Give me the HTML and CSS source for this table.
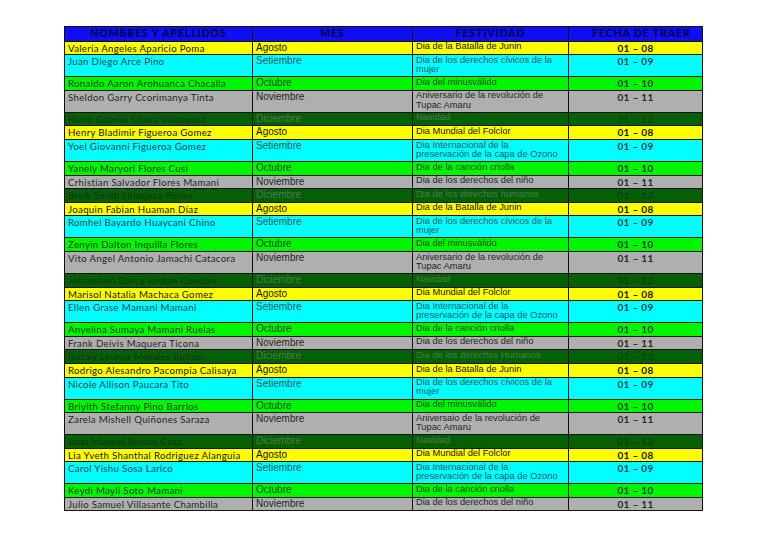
FILE: index.html
```html
<!DOCTYPE html>
<html lang="es">
<head>
<meta charset="utf-8">
<title>Festividades</title>
<link rel="stylesheet" href="styles.css">
</head>
<body>
<div class="sheet">
  <div class="row head">
    <div class="cell">NOMBRES Y APELLIDOS</div><div class="cell">MES</div><div class="cell">FESTIVIDAD</div><div class="cell h-fecha">FECHA DE TRAER</div>
  </div>

  <div class="row y"><div class="cell n">Valeria Angeles Aparicio Poma</div><div class="cell m">Agosto</div><div class="cell f">Dia de la Batalla de Junin</div><div class="cell d">01 – 08</div></div>
  <div class="row c two"><div class="cell n">Juan Diego Arce Pino</div><div class="cell m">Setiembre</div><div class="cell f">Dia de los derechos cívicos de la<br>mujer</div><div class="cell d">01 – 09</div></div>
  <div class="row g"><div class="cell n">Ronaldo Aaron Arohuanca Chacalla</div><div class="cell m">Octubre</div><div class="cell f">Dia del minusválido</div><div class="cell d">01 – 10</div></div>
  <div class="row s two"><div class="cell n">Sheldon Garry Ccorimanya Tinta</div><div class="cell m">Noviembre</div><div class="cell f">Aniversario de la revolución de<br>Tupac Amaru</div><div class="cell d">01 – 11</div></div>
  <div class="row k"><div class="cell n">Kevin Gabriel Chura Velasquez</div><div class="cell m">Diciembre</div><div class="cell f">Navidad</div><div class="cell d">01 – 12</div></div>

  <div class="row y"><div class="cell n">Henry Bladimir Figueroa Gomez</div><div class="cell m">Agosto</div><div class="cell f">Dia Mundial del Folclor</div><div class="cell d">01 – 08</div></div>
  <div class="row c two"><div class="cell n">Yoel Giovanni Figueroa Gomez</div><div class="cell m">Setiembre</div><div class="cell f">Dia Internacional de la<br>preservación de la capa de Ozono</div><div class="cell d">01 – 09</div></div>
  <div class="row g"><div class="cell n">Yanely Maryori Flores Cusi</div><div class="cell m">Octubre</div><div class="cell f">Dia de la canción criolla</div><div class="cell d">01 – 10</div></div>
  <div class="row s"><div class="cell n">Crhistian Salvador Flores Mamani</div><div class="cell m">Noviembre</div><div class="cell f">Dia de los derechos del niño</div><div class="cell d">01 – 11</div></div>
  <div class="row k"><div class="cell n">Breik Smith Hinojosa Flores</div><div class="cell m">Diciembre</div><div class="cell f">Dia de los derechos humanos</div><div class="cell d">01 – 12</div></div>

  <div class="row y"><div class="cell n">Joaquin Fabian Huaman Diaz</div><div class="cell m">Agosto</div><div class="cell f">Dia de la Batalla de Junin</div><div class="cell d">01 – 08</div></div>
  <div class="row c two"><div class="cell n">Romhel Bayardo Huaycani Chino</div><div class="cell m">Setiembre</div><div class="cell f">Dia de los derechos cívicos de la<br>mujer</div><div class="cell d">01 – 09</div></div>
  <div class="row g"><div class="cell n">Zenyin Dalton Inquilla Flores</div><div class="cell m">Octubre</div><div class="cell f">Dia del minusválido</div><div class="cell d">01 – 10</div></div>
  <div class="row s two"><div class="cell n">Vito Angel Antonio Jamachi Catacora</div><div class="cell m">Noviembre</div><div class="cell f">Aniversario de la revolución de<br>Tupac Amaru</div><div class="cell d">01 – 11</div></div>
  <div class="row k"><div class="cell n">Jeffershon Darcy Jordan Condori</div><div class="cell m">Diciembre</div><div class="cell f">Navidad</div><div class="cell d">01 – 12</div></div>

  <div class="row y"><div class="cell n">Marisol Natalia Machaca Gomez</div><div class="cell m">Agosto</div><div class="cell f">Dia Mundial del Folclor</div><div class="cell d">01 – 08</div></div>
  <div class="row c two"><div class="cell n">Ellen Grase Mamani Mamani</div><div class="cell m">Setiembre</div><div class="cell f">Dia Internacional de la<br>preservación de la capa de Ozono</div><div class="cell d">01 – 09</div></div>
  <div class="row g"><div class="cell n">Anyelina Sumaya Mamani Ruelas</div><div class="cell m">Octubre</div><div class="cell f">Dia de la canción criolla</div><div class="cell d">01 – 10</div></div>
  <div class="row s"><div class="cell n">Frank Deivis Maquera Ticona</div><div class="cell m">Noviembre</div><div class="cell f">Dia de los derechos del niño</div><div class="cell d">01 – 11</div></div>
  <div class="row k"><div class="cell n">Nataly Leonor Morales Butron</div><div class="cell m">Diciembre</div><div class="cell f">Dia de los derechos Humanos</div><div class="cell d">01 – 12</div></div>

  <div class="row y"><div class="cell n">Rodrigo Alesandro Pacompia Calisaya</div><div class="cell m">Agosto</div><div class="cell f">Dia de la Batalla de Junin</div><div class="cell d">01 – 08</div></div>
  <div class="row c two"><div class="cell n">Nicole Allison Paucara Tito</div><div class="cell m">Setiembre</div><div class="cell f">Dia de los derechos cívicos de la<br>mujer</div><div class="cell d">01 – 09</div></div>
  <div class="row g"><div class="cell n">Briyith Stefanny Pino Barrios</div><div class="cell m">Octubre</div><div class="cell f">Dia del minusválido</div><div class="cell d">01 – 10</div></div>
  <div class="row s two"><div class="cell n">Zarela Mishell Quiñones Saraza</div><div class="cell m">Noviembre</div><div class="cell f">Aniversaio de la revolución de<br>Tupac Amaru</div><div class="cell d">01 – 11</div></div>
  <div class="row k"><div class="cell n">Juan Manuel Ramos Cruz</div><div class="cell m">Diciembre</div><div class="cell f">Navidad</div><div class="cell d">01 – 12</div></div>

  <div class="row y"><div class="cell n">Lia Yveth Shanthal Rodriguez Alanguia</div><div class="cell m">Agosto</div><div class="cell f">Dia Mundial del Folclor</div><div class="cell d">01 – 08</div></div>
  <div class="row c two"><div class="cell n">Carol Yishu Sosa Larico</div><div class="cell m">Setiembre</div><div class="cell f">Dia Internacional de la<br>preservación de la capa de Ozono</div><div class="cell d">01 – 09</div></div>
  <div class="row g"><div class="cell n">Keydi Mayli Soto Mamani</div><div class="cell m">Octubre</div><div class="cell f">Dia de la canción criolla</div><div class="cell d">01 – 10</div></div>
  <div class="row s last"><div class="cell n">Julio Samuel Villasante Chambilla</div><div class="cell m">Noviembre</div><div class="cell f">Dia de los derechos del niño</div><div class="cell d">01 – 11</div></div>
</div>
</body>
</html>
```
FILE: styles.css
```css
html, body {
  margin: 0;
  padding: 0;
  background: #ffffff;
}

body {
  padding: 26px 0 0 64px;
}

.sheet {
  box-sizing: border-box;
  width: 639px;
  border: 1px solid #111;
  border-bottom: none;
}

.row {
  box-sizing: border-box;
  display: grid;
  grid-template-columns: 188px 160px 156px 1fr;
  height: 13.6px;
  border-bottom: 1px solid #161616;
}

.row.two { height: 22px; }

.cell {
  box-sizing: border-box;
  overflow: hidden;
  white-space: nowrap;
  border-right: 1px solid #111;
}

.cell:last-child { border-right: none; }

.head {
  height: 14.6px;
  background: #0f0ff2;
  border-bottom: 1px solid #111;
}

.head .cell {
  font-family: Lato, "Liberation Sans", sans-serif;
  font-weight: 900;
  font-size: 10.5px;
  letter-spacing: 0.9px;
  line-height: 13.6px;
  color: #00004a;
  text-align: center;
}

.head .h-fecha {
  padding-left: 12px;
}

.n {
  font-family: Lato, "Liberation Sans", sans-serif;
  font-size: 9.7px;
  letter-spacing: 0.3px;
  line-height: 12.6px;
  padding-left: 3px;
}

.m {
  font-family: "Liberation Sans", Arial, sans-serif;
  font-size: 10px;
  line-height: 11.4px;
  padding-left: 3px;
}

.f {
  font-family: "Liberation Sans", Arial, sans-serif;
  font-size: 9.3px;
  line-height: 9.3px;
  padding: 0.6px 0 0 3px;
}

.d {
  font-family: Lato, "Liberation Sans", sans-serif;
  font-weight: 700;
  font-size: 10px;
  letter-spacing: 0.3px;
  line-height: 13px;
  text-align: center;
}

/* row colours */
.y { background: #ffff00; color: #141400; }
.c { background: #00ffff; color: #123f55; }
.c .m, .c .f { color: #1d5866; }
.g { background: #00f500; color: #0c3f0c; }
.g .m, .g .f { color: #0f4f0f; }
.s { background: #afafaf; color: #262626; }
.k { background: #055f05; color: #103510; }
.k .m, .k .f { color: #4e7d4e; }
.k .d { color: #0f3f0f; }
```
